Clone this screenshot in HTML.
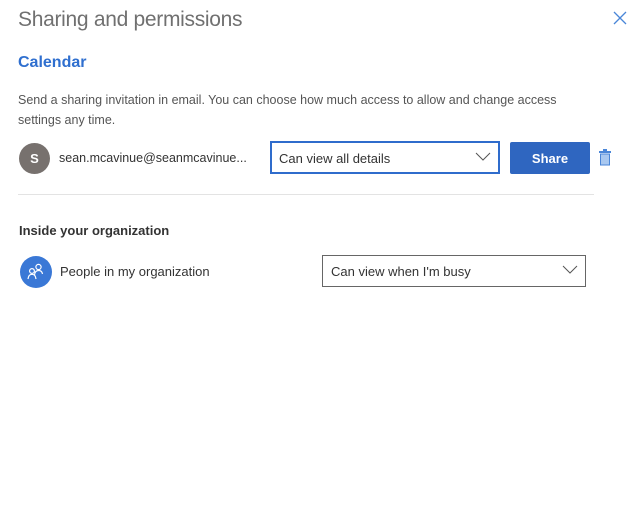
<!DOCTYPE html>
<html><head><style>
body{margin:0;width:644px;height:511px;background:#fff;font-family:"Liberation Sans",sans-serif;position:relative;overflow:hidden;color:#333}
.a{position:absolute;white-space:nowrap}
</style></head><body>
<div class="a" style="left:18px;top:8px;font-size:21px;color:#707070;font-weight:300;letter-spacing:-0.3px">Sharing and permissions</div>
<svg class="a" style="left:613px;top:11px" width="14" height="14"><path d="M1 1L13 13M13 1L1 13" stroke="#4a86d8" stroke-width="1.3"/></svg>
<div class="a" style="left:18px;top:54px;font-size:16px;color:#2f6fcf;font-weight:bold">Calendar</div>
<div class="a" style="left:18px;top:90px;font-size:12.5px;color:#555;line-height:20px">Send a sharing invitation in email. You can choose how much access to allow and change access<br>settings any time.</div>
<div class="a" style="left:19px;top:143px;width:31px;height:31px;border-radius:50%;background:#77716e;color:#fff;font-size:13px;font-weight:bold;text-align:center;line-height:31px">S</div>
<div class="a" style="left:59px;top:151px;font-size:12.5px;color:#333">sean.mcavinue@seanmcavinue...</div>
<div class="a" style="left:270px;top:141px;width:226px;height:29px;border:2px solid #2f6ccc;"></div>
<div class="a" style="left:279px;top:151px;font-size:13px;color:#333">Can view all details</div>
<svg class="a" style="left:475px;top:152px" width="16" height="10"><path d="M1 1L8 8L15 1" fill="none" stroke="#555" stroke-width="1"/></svg>
<div class="a" style="left:510px;top:142px;width:80px;height:32px;background:#2f66c0;border-radius:2px;color:#fff;font-size:13px;font-weight:bold;text-align:center;line-height:33px">Share</div>
<svg class="a" style="left:598px;top:149px" width="16" height="18"><rect x="1" y="2" width="12" height="2" fill="#4a86d8"/><rect x="5" y="0" width="4" height="2" fill="#4a86d8"/><rect x="2.5" y="5" width="9" height="11" fill="#a9c8f0" stroke="#4a86d8"/></svg>
<div class="a" style="left:18px;top:194px;width:576px;height:1px;background:#e3e3e3"></div>
<div class="a" style="left:19px;top:223px;font-size:13px;color:#333;font-weight:bold">Inside your organization</div>
<div class="a" style="left:20px;top:256px;width:32px;height:32px;border-radius:50%;background:#3a78d6"></div>
<svg class="a" style="left:26px;top:262px" width="20" height="20"><circle cx="12.5" cy="5" r="2.6" fill="none" stroke="#fff" stroke-width="1.2"/><path d="M8.5 13Q9 8.5 12.5 8.5Q16 8.5 16.5 12" fill="none" stroke="#fff" stroke-width="1.2"/><circle cx="6" cy="9" r="2.4" fill="none" stroke="#fff" stroke-width="1.2"/><path d="M2 17Q2.5 12.3 6 12.3Q9.5 12.3 10 17" fill="none" stroke="#fff" stroke-width="1.2"/></svg>
<div class="a" style="left:60px;top:264px;font-size:13px;color:#333">People in my organization</div>
<div class="a" style="left:322px;top:255px;width:262px;height:30px;border:1px solid #666"></div>
<div class="a" style="left:331px;top:264px;font-size:13px;color:#333">Can view when I'm busy</div>
<svg class="a" style="left:562px;top:265px" width="16" height="10"><path d="M1 1L8 8L15 1" fill="none" stroke="#555" stroke-width="1"/></svg>
</body></html>
